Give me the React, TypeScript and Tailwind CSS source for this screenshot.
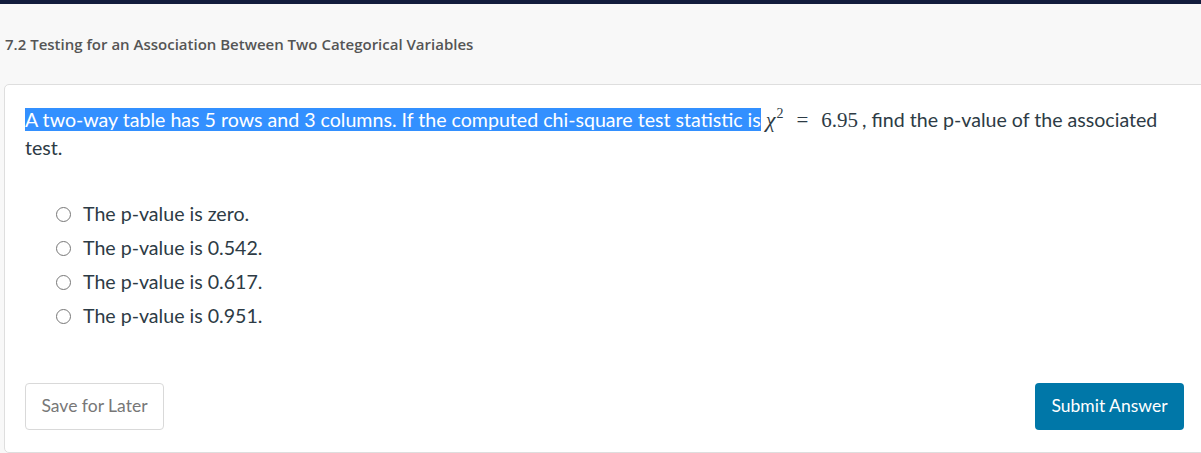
const options = [
  'The p-value is zero.',
  'The p-value is 0.542.',
  'The p-value is 0.617.',
  'The p-value is 0.951.',
];

const App = () => {
  return (
    <div className="h-[453px] w-[1201px] overflow-hidden bg-[#f8f8f8]">
      <div className="h-1 bg-[#121c3d]" />
      <div className="flex h-20 items-center pl-[5px]">
        <h1 className="font-['Open_Sans',sans-serif] text-[15px] font-semibold text-[#555]">
          7.2 Testing for an Association Between Two Categorical Variables
        </h1>
      </div>
      <div className="ml-1 w-[1220px] rounded-[5px] border border-[#dedede] bg-white px-5 pt-[21px] pb-[22px] font-['Lato',sans-serif] text-[#2d3b45]">
        <p className="w-[1150px] text-[19.6px] leading-[28px]">
          <span className="bg-[#3390ff] text-white">
            A two-way table has 5 rows and 3 columns. If the computed chi-square test statistic is
          </span>
          <span className="ml-[5px] font-['Liberation_Serif',serif] text-[21px] leading-none">
            <i className="text-[22px]">χ</i>
            <span className="relative -top-[9px] ml-[1px] text-[14px]">2</span>
            <span className="mx-[13px]">=</span>6.95
          </span>
          <span className="ml-[4px]">, find the p-value of the associated test.</span>
        </p>
        <div className="mt-[35px] flex flex-col pl-[31px]">
          {options.map((o) => (
            <label key={o} className="flex h-[34px] items-center text-[19.6px]">
              <span className="mr-[12px] h-[15px] w-[15px] rounded-full border-[1.5px] border-[#777]" />
              {o}
            </label>
          ))}
        </div>
        <div className="mt-[50px] flex w-[1159px] justify-between">
          <button className="h-[47px] w-[139px] rounded-[4px] border border-[#d9d9d9] bg-white text-[17.5px] text-[#777]">
            Save for Later
          </button>
          <button className="h-[47px] w-[149px] rounded-[4px] bg-[#0077a8] text-[17.5px] text-white">
            Submit Answer
          </button>
        </div>
      </div>
    </div>
  );
};

export default App;
